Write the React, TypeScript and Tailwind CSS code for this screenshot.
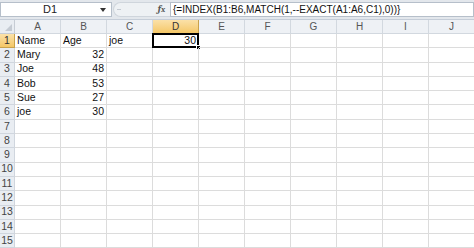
const cols = ["A", "B", "C", "D", "E", "F", "G", "H", "I", "J"];

const data: Record<number, (string | number)[]> = {
  1: ["Name", "Age", "joe", 30],
  2: ["Mary", 32],
  3: ["Joe", 48],
  4: ["Bob", 53],
  5: ["Sue", 27],
  6: ["joe", 30],
};

function FormulaBar() {
  return (
    <div className="flex h-[20px] items-center bg-[#e3e7ec] border-b border-[#c5cdd8]">
      <div className="relative flex h-[15px] w-[112px] items-center justify-center bg-white border border-[#b6bfca] text-[11px] text-[#222]">
        <span className="pr-3">D1</span>
        <svg className="absolute right-[5px] top-[5px]" width="6" height="4" viewBox="0 0 6 4">
          <path d="M0 0 L6 0 L3 4 Z" fill="#333" />
        </svg>
      </div>
      <div className="ml-[1px] flex h-[15px] flex-1 items-center rounded-l-full border border-r-0 border-[#cfd5dc] bg-[#eef1f4] pl-[3px]">
        <div className="h-[1px] w-[4px] bg-[#c4cad2]" />
        <div className="flex-1" />
        <div className="mr-[5px] font-serif italic text-[10px] font-bold text-[#555]">
          f<span className="text-[8px]">x</span>
        </div>
      </div>
      <div className="flex h-[15px] w-[304px] items-center bg-white border border-[#b6bfca] pl-[2px] text-[10px] text-[#111] whitespace-nowrap">
        {"{=INDEX(B1:B6,MATCH(1,--EXACT(A1:A6,C1),0))}"}
      </div>
    </div>
  );
}

function HeaderRow() {
  return (
    <div className="flex h-[14px]">
      <div className="relative w-[15px] shrink-0 bg-[#e9edf2] border-r border-b border-[#c6ccd4]">
        <svg className="absolute right-[2px] bottom-[2px]" width="7" height="7" viewBox="0 0 7 7">
          <path d="M7 0 L7 7 L0 7 Z" fill="#c4cad2" />
        </svg>
      </div>
      {cols.map((c) => (
        <div
          key={c}
          className={`flex w-[46px] shrink-0 items-center justify-center border-r border-b text-[10px] ${
            c === "D"
              ? "bg-gradient-to-b from-[#fbe1a8] to-[#f4c766] border-[#c9a24c] text-[#333]"
              : "bg-[#eef1f5] border-[#d2d8df] text-[#555]"
          }`}
        >
          {c}
        </div>
      ))}
    </div>
  );
}

function Row({ n }: { n: number }) {
  const vals = data[n] || [];
  return (
    <div className="flex h-[14.3px]">
      <div
        className={`flex w-[15px] shrink-0 items-center justify-center border-r border-b text-[10.5px] ${
          n === 1
            ? "bg-gradient-to-b from-[#fbe1a8] to-[#f4c766] border-[#c9a24c] text-[#333]"
            : "bg-[#e9edf2] border-[#d0d6de] text-[#444]"
        }`}
      >
        {n}
      </div>
      {cols.map((c, i) => {
        const v = vals[i];
        const isNum = typeof v === "number";
        const sel = n === 1 && c === "D";
        return (
          <div
            key={c}
            className={`relative flex w-[46px] shrink-0 items-center border-r border-b border-[#dcdcdc] px-[2px] text-[10.5px] text-[#111] ${
              isNum ? "justify-end" : "justify-start"
            }`}
          >
            {v !== undefined ? v : ""}
            {sel && (
              <>
                <div className="absolute -left-[1px] -top-[1px] -right-[1px] -bottom-[1px] border-2 border-black" />
                <div className="absolute -right-[3px] -bottom-[3px] h-[5px] w-[5px] bg-black border border-white" />
              </>
            )}
          </div>
        );
      })}
    </div>
  );
}

export default function App() {
  return (
    <div className="h-[248px] w-[474px] overflow-hidden bg-white font-['Liberation_Sans',sans-serif]">
      <FormulaBar />
      <HeaderRow />
      {Array.from({ length: 15 }, (_, i) => (
        <Row key={i} n={i + 1} />
      ))}
    </div>
  );
}
